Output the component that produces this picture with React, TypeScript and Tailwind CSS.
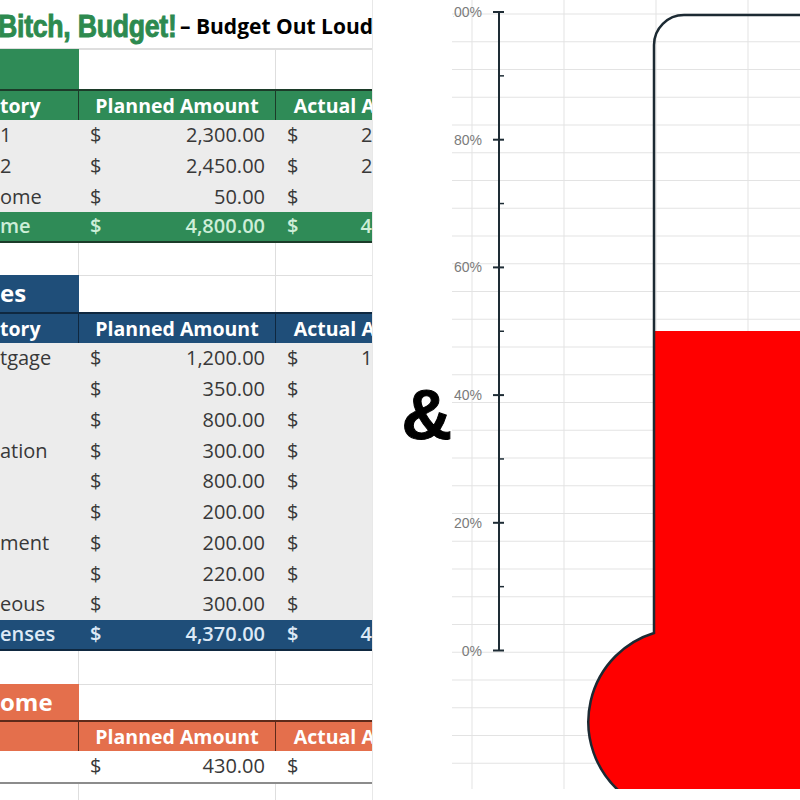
import React from 'react'

type Theme = { bg: string; soft: string; dark: string }

const themes: Record<string, Theme> = {
  green: { bg: 'bg-[#2f8b57]', soft: 'text-[#cdeed8]', dark: 'border-[#1c3b29]' },
  blue: { bg: 'bg-[#1f4e79]', soft: 'text-[#dde9f6]', dark: 'border-[#0f2840]' },
  orange: { bg: 'bg-[#e46f4c]', soft: 'text-white', dark: 'border-[#5e2a1a]' },
}

const font = { fontFamily: "'Open Sans', 'Noto Sans', sans-serif" }

function SectionRow({ theme, label, h }: { theme: Theme; label: string; h: string }) {
  return (
    <div className={`flex ${h}`}>
      <div className={`w-[79px] shrink-0 ${theme.bg} flex items-center text-[24px] font-bold text-white leading-none`}>
        {label}
      </div>
      <div className="w-[197px] shrink-0 border-r border-[#dedede] border-t" />
      <div className="w-[182px] shrink-0 border-t border-[#dedede]" />
    </div>
  )
}

function HeaderRow({ theme, first }: { theme: Theme; first: string }) {
  return (
    <div className={`flex h-[31px] ${theme.bg} border-t-2 ${theme.dark} text-white font-bold text-[19.5px] leading-none`}>
      <div className={`w-[79px] shrink-0 flex items-center border-r ${theme.dark}`}>{first}</div>
      <div className={`w-[197px] shrink-0 flex items-center justify-center border-r ${theme.dark}`}>Planned Amount</div>
      <div className="w-[182px] shrink-0 flex items-center justify-center whitespace-nowrap">Actual Amount</div>
    </div>
  )
}

function Money({ value, cls }: { value: string; cls: string }) {
  return (
    <div className={`shrink-0 flex items-center justify-between pl-[11px] ${cls}`}>
      <span>$</span>
      <span>{value}</span>
    </div>
  )
}

function DataRow({ label, planned, actual, h, bg = 'bg-[#ececec]' }: { label: string; planned: string; actual: string; h: string; bg?: string }) {
  return (
    <div className={`flex ${h} ${bg} text-[#383838] text-[20px] leading-none`}>
      <div className="w-[79px] shrink-0 flex items-center">{label}</div>
      <Money value={planned} cls="w-[197px] pr-[11px]" />
      <Money value={actual} cls="w-[182px] pr-[18px]" />
    </div>
  )
}

function TotalRow({ theme, label, planned, actual }: { theme: Theme; label: string; planned: string; actual: string }) {
  return (
    <div className={`flex h-[31px] ${theme.bg} ${theme.soft} border-b-2 ${theme.dark} text-[20px] font-semibold leading-none`}>
      <div className="w-[79px] shrink-0 flex items-center">{label}</div>
      <Money value={planned} cls="w-[197px] pr-[11px]" />
      <Money value={actual} cls="w-[182px] pr-[18px]" />
    </div>
  )
}

function EmptyRow({ h }: { h: string }) {
  return (
    <div className={`flex ${h}`}>
      <div className="w-[79px] shrink-0 border-r border-[#dedede]" />
      <div className="w-[197px] shrink-0 border-r border-[#dedede]" />
      <div className="w-[182px] shrink-0" />
    </div>
  )
}

function Sheet() {
  const expenses = [
    ['tgage', '1,200.00', '1,200.00'],
    ['', '350.00', '350.00'],
    ['', '800.00', '800.00'],
    ['ation', '300.00', '300.00'],
    ['', '800.00', '800.00'],
    ['', '200.00', '200.00'],
    ['ment', '200.00', '200.00'],
    ['', '220.00', '220.00'],
    ['eous', '300.00', '300.00'],
  ]
  return (
    <div className="w-[373px] h-[800px] shrink-0 overflow-hidden border-r border-[#e8e8e8]" style={font}>
      <div className="w-[458px]">
        <div className="flex items-center h-[49px] pt-[6px] border-b border-[#dedede] whitespace-nowrap">
          <span className="inline-block w-[182px] -ml-[2px]">
            <span
              className="inline-block origin-left scale-x-[0.86] text-[31px] font-bold text-[#2d8a4f] tracking-[-0.3px] [-webkit-text-stroke:0.9px_#2d8a4f]"
              style={{ fontFamily: "'Liberation Sans', Arial, sans-serif" }}
            >
              Bitch, Budget!
            </span>
          </span>
          <span className="text-[21px] font-bold text-black">– Budget Out Loud</span>
        </div>

        <SectionRow theme={themes.green} label="" h="h-[40px]" />
        <HeaderRow theme={themes.green} first="tory" />
        <DataRow label="1" planned="2,300.00" actual="2,300.00" h="h-[30.7px]" />
        <DataRow label="2" planned="2,450.00" actual="2,450.00" h="h-[30.7px]" />
        <DataRow label="ome" planned="50.00" actual="50.00" h="h-[30.6px]" />
        <TotalRow theme={themes.green} label="me" planned="4,800.00" actual="4,800.00" />
        <EmptyRow h="h-[32px]" />

        <SectionRow theme={themes.blue} label="es" h="h-[37px]" />
        <HeaderRow theme={themes.blue} first="tory" />
        {expenses.map(([l, p, a], i) => (
          <DataRow key={i} label={l} planned={p} actual={a} h="h-[30.78px]" />
        ))}
        <TotalRow theme={themes.blue} label="enses" planned="4,370.00" actual="4,370.00" />
        <EmptyRow h="h-[33px]" />

        <SectionRow theme={themes.orange} label="ome" h="h-[36px]" />
        <HeaderRow theme={themes.orange} first="" />
        <div className="border-b-2 border-[#8c8c8c]">
          <DataRow label="" planned="430.00" actual="" h="h-[31px]" bg="bg-white" />
        </div>
        <EmptyRow h="h-[20px]" />
      </div>
    </div>
  )
}

function Thermometer() {
  const rows = Array.from({ length: 29 }, (_, i) => 14 + i * 27.75)
  const cols = [20, 112, 204, 296]
  const labels = ['0%', '20%', '40%', '60%', '80%', '100%']
  const y0 = 650.5
  const step = 127.7
  const bulb = 'A 93 93 0 0 0 166 790 L 166 830 L 420 830'
  return (
    <div className="w-[348px] h-[789px] shrink-0 overflow-hidden">
      <svg width="348" height="789" viewBox="0 0 348 789">
        <defs>
          <clipPath id="axis-clip">
            <rect x="1.5" y="0" width="346" height="789" />
          </clipPath>
        </defs>
        {rows.map((y) => (
          <line key={y} x1="0" x2="348" y1={y} y2={y} stroke="#e3e3e3" strokeWidth="1" />
        ))}
        {cols.map((x) => (
          <line key={x} x1={x} x2={x} y1="0" y2="789" stroke="#e3e3e3" strokeWidth="1" />
        ))}

        <line x1="47" x2="47" y1={y0 - 5 * step} y2={y0} stroke="#1e2c35" strokeWidth="2" />
        <g clipPath="url(#axis-clip)">
          {labels.map((l, k) => {
            const y = y0 - k * step
            return (
              <text
                key={l}
                x="30"
                y={y + 5}
                textAnchor="end"
                fontSize="14"
                fill="#7b7b7b"
                fontFamily="'Liberation Sans', Arial, sans-serif"
              >
                {l}
              </text>
            )
          })}
        </g>
        {labels.map((l, k) => {
          const y = y0 - k * step
          return <line key={l} x1="41" x2="52" y1={y} y2={y} stroke="#1e2c35" strokeWidth="2" />
        })}
        {[0, 1, 2, 3, 4].map((k) => {
          const y = y0 - (k + 0.5) * step
          return <line key={k} x1="47" x2="52" y1={y} y2={y} stroke="#1e2c35" strokeWidth="1.5" />
        })}

        <path d={`M 420 331 H 202 V 633 ${bulb} Z`} fill="#ff0000" />
        <path
          d="M 420 15 H 232 A 30 30 0 0 0 202 45 V 633 A 93 93 0 0 0 166 790 L 150 830"
          fill="none"
          stroke="#1c2a33"
          strokeWidth="2.5"
        />
      </svg>
    </div>
  )
}

export default function App() {
  return (
    <div className="w-[800px] h-[800px] flex bg-white overflow-hidden">
      <Sheet />
      <div className="w-[79px] shrink-0 flex items-center justify-end">
        <span
          className="text-[70px] font-bold text-black leading-none mt-[30px] [-webkit-text-stroke:1px_#000]"
          style={{ fontFamily: "'Liberation Sans', Arial, sans-serif" }}
        >
          &amp;
        </span>
      </div>
      <Thermometer />
    </div>
  )
}
